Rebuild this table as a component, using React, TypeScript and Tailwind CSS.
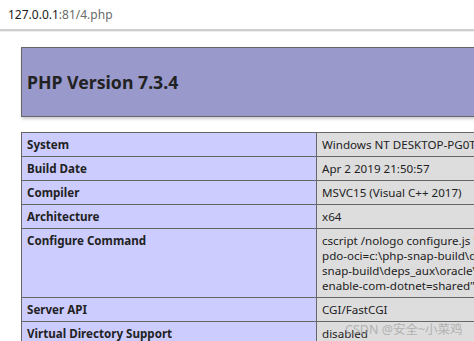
const rows: { label: string; value: string[] }[] = [
  { label: "System", value: ["Windows NT DESKTOP-PG0T6K8 10.0 build 17763 (Windows 10) AMD64"] },
  { label: "Build Date", value: ["Apr 2 2019 21:50:57"] },
  { label: "Compiler", value: ["MSVC15 (Visual C++ 2017)"] },
  { label: "Architecture", value: ["x64"] },
  {
    label: "Configure Command",
    value: [
      'cscript /nologo configure.js "--enable-snapshot-build" "--enable-debug-pack" "--with-',
      'pdo-oci=c:\\php-snap-build\\deps_aux\\oracle\\x64\\instantclient_12_1\\sdk,shared" "--with-oci8-12c=c:\\php-',
      'snap-build\\deps_aux\\oracle\\x64\\instantclient_12_1\\sdk,shared" "--enable-object-out-dir=../obj/" "--',
      'enable-com-dotnet=shared" "--without-analyzer" "--with-pgo"',
    ],
  },
  { label: "Server API", value: ["CGI/FastCGI"] },
  { label: "Virtual Directory Support", value: ["disabled"] },
];

export default function App() {
  return (
    <div className="relative h-[341px] w-[474px] overflow-hidden bg-white font-['Noto_Sans',sans-serif] text-[#222]">
      {/* address bar */}
      <div className="flex h-[31px] items-center border-b-2 border-[#cfcfcf] pl-[8px] text-[12px] shadow-[0_1px_0_#eee]">
        <span className="text-[#202020]">127.0.0.1</span>
        <span className="text-[#6b6b6b]">:81/4.php</span>
      </div>

      <div className="w-[934px] pl-[21px]">
        <div className="mt-[16px] flex h-[70px] items-center border border-[#666] bg-[#9999cc] px-[5px] shadow-[1px_2px_3px_#ccc]">
          <h1 className="text-[17.7px] font-bold">PHP Version 7.3.4</h1>
        </div>

        <table className="mt-[15px] w-full table-fixed border-collapse text-[11.6px]">
          <colgroup>
            <col className="w-[295px]" />
            <col />
          </colgroup>
          <tbody>
            {rows.map((r) => (
              <tr key={r.label}>
                <td className="border border-[#666] bg-[#ccccff] px-[5px] py-[4px] align-top font-bold leading-[15px]">
                  {r.label}
                </td>
                <td className="overflow-hidden border border-[#666] bg-[#dddddd] px-[5px] py-[4px] align-top leading-[15px]">
                  {r.value.map((line) => (
                    <div key={line} className="h-[15px] whitespace-nowrap">
                      {line}
                    </div>
                  ))}
                </td>
              </tr>
            ))}
          </tbody>
        </table>
      </div>

      {/* watermark */}
      <div className="absolute left-[345px] top-[321px] font-['Noto_Sans','Noto_Sans_CJK_SC',sans-serif] text-[12.5px] text-[#a8a8a8] opacity-80">
        CSDN @安全~小菜鸡
      </div>
    </div>
  );
}
